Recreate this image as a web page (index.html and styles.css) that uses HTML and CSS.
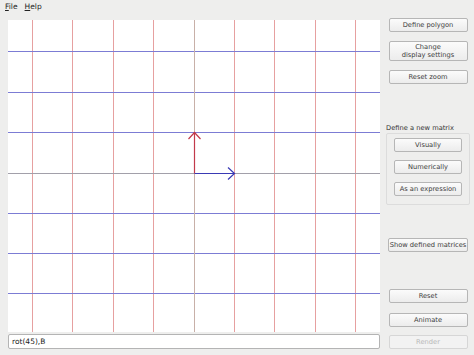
FILE: index.html
```html
<!DOCTYPE html>
<html lang="en">
<head>
    <meta charset="utf-8">
    <title>lintrans</title>
    <link rel="stylesheet" href="styles.css">
</head>
<body>
    <div class="menubar">
        <span class="menu"><u>F</u>ile</span>
        <span class="menu"><u>H</u>elp</span>
    </div>
    <div class="main">
        <div class="left">
            <div class="canvas">
                <svg width="372" height="312" viewBox="0 0 372 312">
                    <g stroke="#e6a0a0" stroke-width="1">
                        <line x1="24.5" y1="0" x2="24.5" y2="312"/>
                        <line x1="64.5" y1="0" x2="64.5" y2="312"/>
                        <line x1="105.5" y1="0" x2="105.5" y2="312"/>
                        <line x1="145.5" y1="0" x2="145.5" y2="312"/>
                        <line x1="226.5" y1="0" x2="226.5" y2="312"/>
                        <line x1="266.5" y1="0" x2="266.5" y2="312"/>
                        <line x1="307.5" y1="0" x2="307.5" y2="312"/>
                        <line x1="347.5" y1="0" x2="347.5" y2="312"/>
                    </g>
                    <g stroke="#7c7cd4" stroke-width="1">
                        <line x1="0" y1="31.5" x2="372" y2="31.5"/>
                        <line x1="0" y1="72.5" x2="372" y2="72.5"/>
                        <line x1="0" y1="112.5" x2="372" y2="112.5"/>
                        <line x1="0" y1="193.5" x2="372" y2="193.5"/>
                        <line x1="0" y1="233.5" x2="372" y2="233.5"/>
                        <line x1="0" y1="273.5" x2="372" y2="273.5"/>
                    </g>
                    <line x1="0" y1="153.5" x2="372" y2="153.5" stroke="#a2a0aa"/>
                    <line x1="186.5" y1="0" x2="186.5" y2="312" stroke="#c8b0a8"/>
                    <g stroke="#c23a4a" stroke-width="1.2" fill="none">
                        <line x1="186.5" y1="153.5" x2="186.5" y2="112"/>
                        <polyline points="180.5,119 186.5,112.5 192.5,119"/>
                    </g>
                    <g stroke="#3a3ab4" stroke-width="1.2" fill="none">
                        <line x1="186.5" y1="153.5" x2="227" y2="153.5"/>
                        <polyline points="220,147.5 226.5,153.5 220,159.5"/>
                    </g>
                </svg>
            </div>
            <div class="input">rot(45),B</div>
        </div>
        <div class="right">
            <div class="btn">Define polygon</div>
            <div class="btn tall">Change<br>display settings</div>
            <div class="btn">Reset zoom</div>
            <div class="group-title">Define a new matrix</div>
            <div class="group">
                <div class="btn">Visually</div>
                <div class="btn">Numerically</div>
                <div class="btn">As an expression</div>
            </div>
            <div class="btn show">Show defined matrices</div>
            <div class="btn bottom">Reset</div>
            <div class="btn animate">Animate</div>
            <div class="btn disabled">Render</div>
        </div>
    </div>
</body>
</html>
```

FILE: styles.css
```css
* {
    box-sizing: border-box;
}
html, body {
    margin: 0;
    width: 474px;
    height: 355px;
    overflow: hidden;
    background: #eeeeed;
    font-family: 'DejaVu Sans', 'Liberation Sans', sans-serif;
    font-size: 6.7px;
    color: #3c3c3c;
}
.menubar {
    height: 12px;
    display: flex;
    align-items: center;
    gap: 7px;
    padding: 1px 0 0 5px;
    color: #222;
    font-size: 7.5px;
}
.menu u {
    text-decoration: underline;
}
.main {
    display: flex;
    padding: 8px 0 0 8px;
}
.left {
    width: 372px;
    display: flex;
    flex-direction: column;
    gap: 2px;
}
.canvas {
    width: 372px;
    height: 312px;
    background: #ffffff;
}
.canvas svg {
    display: block;
}
.input {
    height: 15px;
    background: #fff;
    border: 1px solid #b4b4b4;
    border-radius: 2px;
    padding: 1px 0 0 3px;
    color: #222;
    font-size: 7.5px;
    line-height: 12px;
}
.right {
    width: 86px;
    height: 331px;
    margin-left: 5px;
    margin-top: -2px;
    display: flex;
    flex-direction: column;
    align-items: center;
}
.btn {
    width: 79px;
    height: 14px;
    flex: none;
    border: 1px solid #b6b6b6;
    border-radius: 2px;
    background: linear-gradient(#fbfbfb, #ececec);
    display: flex;
    align-items: center;
    justify-content: center;
    text-align: center;
    line-height: 8px;
    margin-bottom: 9px;
    white-space: nowrap;
}
.btn.tall {
    height: 20px;
}
.group-title {
    align-self: flex-start;
    margin: 31px 0 1px 1px;
    color: #333;
}
.group {
    width: 84px;
    border: 1px solid #dcdcdc;
    border-radius: 2px;
    padding: 4px 0 0 0;
    display: flex;
    flex-direction: column;
    align-items: center;
}
.group .btn {
    width: 68px;
    margin-bottom: 8px;
}
.btn.show {
    margin-top: 33px;
    width: 80px;
    margin-bottom: 0;
}
.btn.bottom {
    margin-top: auto;
    margin-bottom: 10px;
}
.btn.animate {
    margin-bottom: 8px;
}
.btn.disabled {
    color: #b8b8b8;
    border-color: #d6d6d6;
    background: #f2f2f2;
    margin-bottom: 0;
}
```
